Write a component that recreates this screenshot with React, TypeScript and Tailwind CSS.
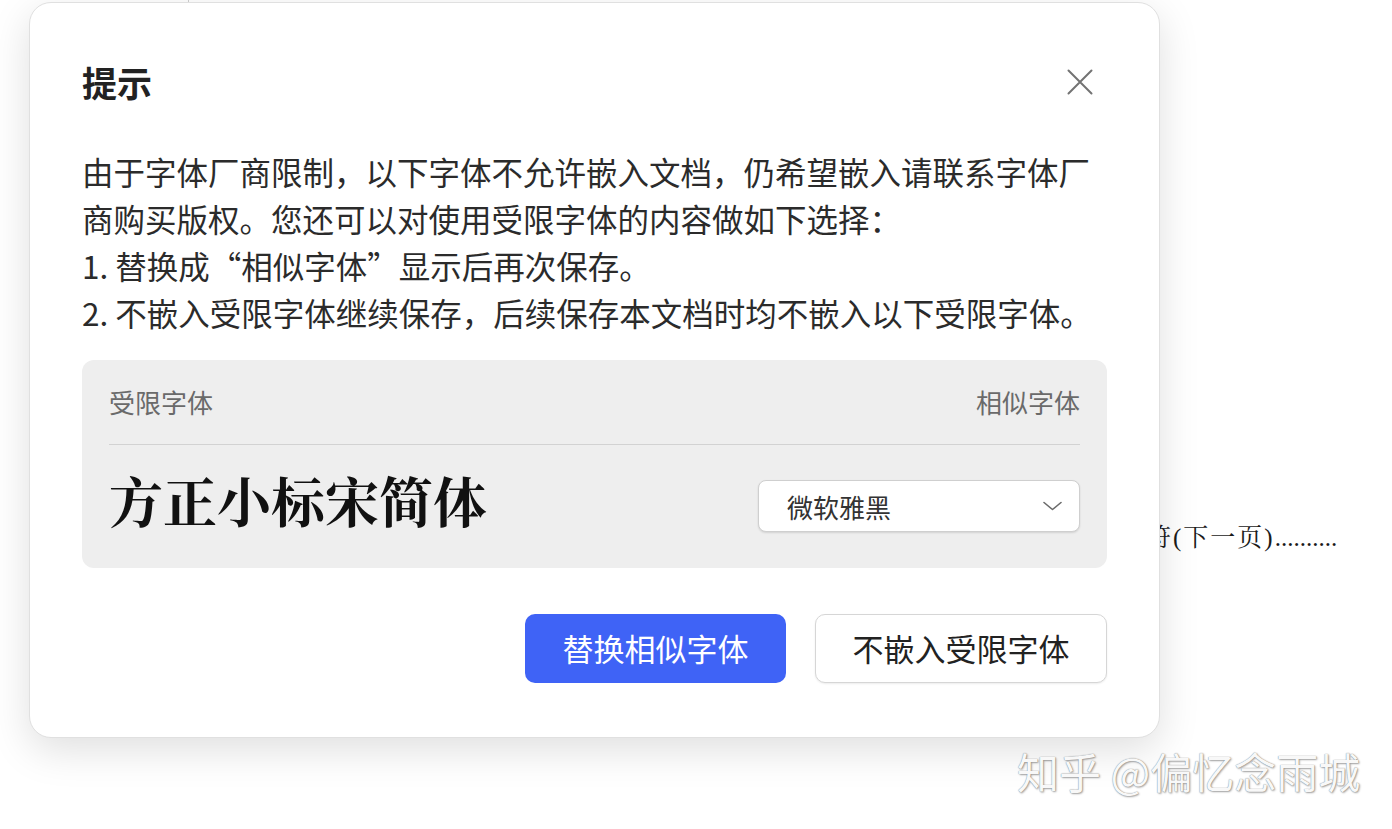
import React from "react";

const sans = "font-['Noto_Sans_CJK_SC','Noto_Sans',sans-serif]";

function CloseIcon() {
  return (
    <svg width="26" height="26" viewBox="0 0 26 26" fill="none">
      <path d="M1.5 1.5 L24.5 24.5 M24.5 1.5 L1.5 24.5" stroke="#737373" strokeWidth="2" strokeLinecap="round" />
    </svg>
  );
}

function Chevron() {
  return (
    <svg width="19" height="10" viewBox="0 0 19 10" fill="none">
      <path d="M1 1.5 L9.5 8.5 L18 1.5" stroke="#6b6b6b" strokeWidth="1.6" strokeLinecap="round" strokeLinejoin="round" />
    </svg>
  );
}

export default function App(): React.ReactElement {
  return (
    <div className={`relative w-[1392px] h-[829px] overflow-hidden bg-white ${sans}`}>
      {/* document behind the dialog */}
      <div className="absolute left-[188px] top-0 h-[8px] w-px bg-[#cfcfcf]" />
      <div className="absolute left-[1146px] top-[521px] text-[25px] leading-[34px] tracking-[2px] text-[#1a1a1a] font-['Liberation_Serif','Noto_Serif_CJK_SC',serif]">
        符(下一页)<span className="tracking-normal">..........</span>
      </div>

      {/* dialog */}
      <div className="relative z-10 ml-[29px] mt-[2px] w-[1131px] rounded-[22px] border border-[#e0e0e0] bg-white pl-[52px] pr-[52px] pt-[57px] pb-[54px] shadow-[0_12px_40px_rgba(0,0,0,0.13)]">
        <div className="flex h-[44px] items-center justify-between">
          <h2 className="text-[35px] font-bold leading-[44px] text-[#222]">提示</h2>
          <button className="mr-[14px] flex h-[26px] w-[26px] items-center justify-center">
            <CloseIcon />
          </button>
        </div>

        <p className="mt-[44px] text-[31.5px] leading-[47px] text-[#2b2b2b]">
          由于字体厂商限制，以下字体不允许嵌入文档，仍希望嵌入请联系字体厂商购买版权。您还可以对使用受限字体的内容做如下选择：
          <br />
          1. 替换成“相似字体”显示后再次保存。
          <br />
          2. 不嵌入受限字体继续保存，后续保存本文档时均不嵌入以下受限字体。
        </p>

        <div className="mt-[24px] rounded-[12px] bg-[#eeeeee] px-[27px] pt-[23px]">
          <div className="flex items-center justify-between border-b border-[#d2d2d2] pb-[24px] text-[26px] leading-[37px] text-[#6a6a6a]">
            <span>受限字体</span>
            <span>相似字体</span>
          </div>
          <div className="flex items-center justify-between pt-[35px] pb-[36px]">
            <span className="pb-[12px] text-[54px] font-bold leading-[40px] text-[#111] font-['Noto_Serif_CJK_SC','Noto_Sans_CJK_SC',serif]">
              方正小标宋简体
            </span>
            <div className="flex h-[52px] w-[322px] items-center justify-between rounded-[8px] border border-[#cfcfcf] bg-white pl-[28px] pr-[17px] shadow-[0_1px_2px_rgba(0,0,0,0.12)]">
              <span className="text-[26px] text-[#333]">微软雅黑</span>
              <Chevron />
            </div>
          </div>
        </div>

        <div className="mt-[46px] flex justify-end gap-[29px]">
          <button className="h-[69px] w-[261px] rounded-[10px] bg-[#3f63f6] text-[31px] text-white">
            替换相似字体
          </button>
          <button className="h-[69px] w-[292px] rounded-[10px] border border-[#d6d6d6] bg-white text-[31px] text-[#222] shadow-[0_1px_2px_rgba(0,0,0,0.08)]">
            不嵌入受限字体
          </button>
        </div>
      </div>

      {/* watermark */}
      <div className="absolute left-[1017px] top-[744px] z-20 text-[42px] leading-[54px] text-[#f8f8f8] [text-shadow:0_0_1px_#6b6b6b,1px_1px_2px_rgba(0,0,0,0.35)]">
        知乎 @偏忆念雨城
      </div>
    </div>
  );
}
